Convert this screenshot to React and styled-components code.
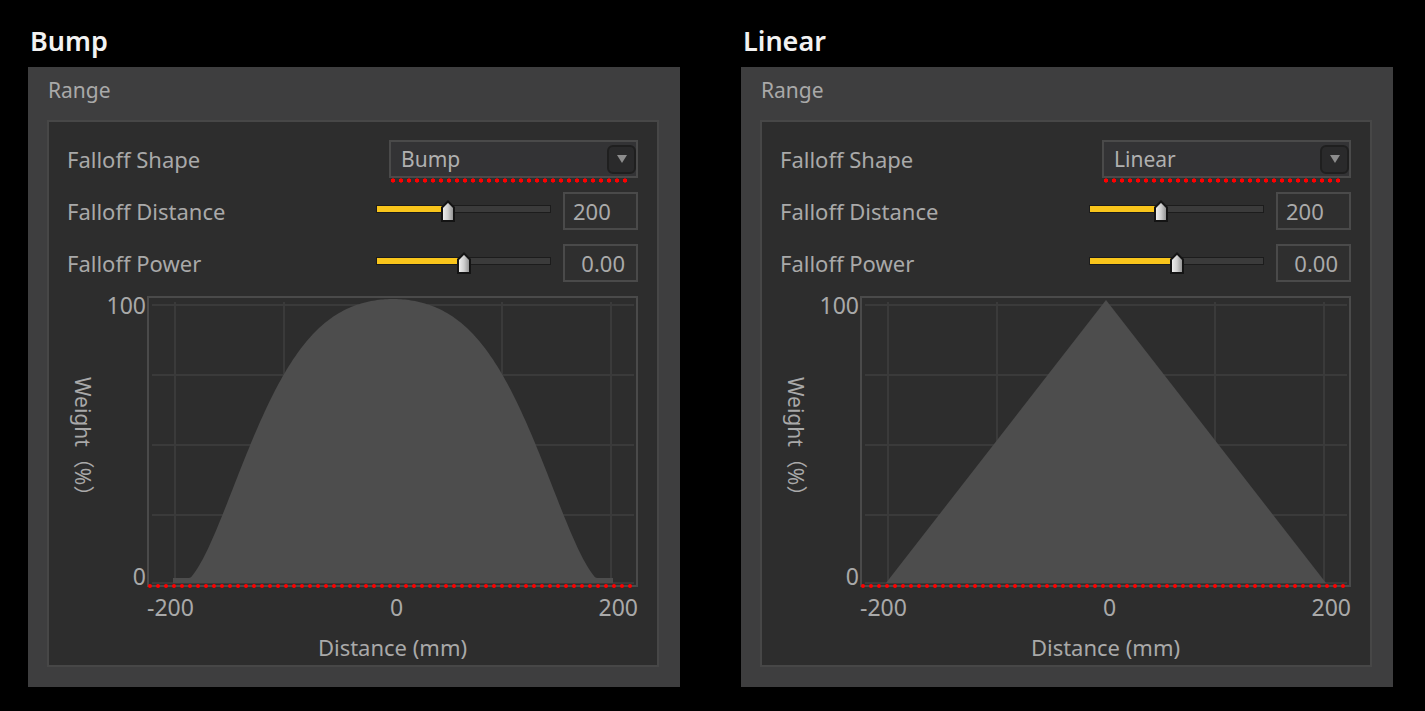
import React from 'react';
import styled, { createGlobalStyle } from 'styled-components';

const GlobalStyle = createGlobalStyle`
  html, body {
    margin: 0;
    padding: 0;
    background: #000;
  }
  body {
    font-family: "Noto Sans", "Open Sans", sans-serif;
  }
`

const Page = styled.div`
  width: 1425px;
  height: 711px;
  box-sizing: border-box;
  padding: 23px 0 0 28px;
  display: flex;
  gap: 61px;
`
const Column = styled.section`
  width: 652px;
  display: flex;
  flex-direction: column;
`
const Title = styled.h2`
  margin: 0 0 8px 2px;
  font-size: 27px;
  line-height: 36px;
  font-weight: 600;
  color: #f2f2f2;
`
const Panel = styled.div`
  height: 620px;
  box-sizing: border-box;
  background: #3e3e3f;
  padding: 10px 21px 20px 19px;
  display: flex;
  flex-direction: column;
`
const PanelLabel = styled.div`
  margin: 0 0 17px 1px;
  font-size: 21px;
  line-height: 26px;
  color: #a9a9a9;
`
const Group = styled.div`
  flex: 1;
  border: 2px solid #474747;
  background: #2d2d2d;
  padding: 18px 19px 0 0;
  display: flex;
  flex-direction: column;
  gap: 14px;
`
const Row = styled.div`
  height: 38px;
  padding-left: 18px;
  display: flex;
  align-items: center;
  justify-content: space-between;
`
const Label = styled.span`
  font-size: 22px;
  color: #a9a9a9;
`
const Controls = styled.div`
  display: flex;
  align-items: center;
  gap: 12px;
`
const Dropdown = styled.div`
  position: relative;
  width: 249px;
  height: 38px;
  box-sizing: border-box;
  border: 2px solid #4a4a4a;
  background: #333335;
  display: flex;
  align-items: center;
  justify-content: space-between;
  padding-left: 10px;
  font-size: 21px;
  color: #b0b0b0;
  &::after {
    content: '';
    position: absolute;
    left: -2px;
    right: 6px;
    bottom: -7px;
    height: 5px;
    background-image: radial-gradient(circle, #ff0000 1.9px, transparent 2.3px);
    background-size: 8px 5px;
    background-repeat: repeat-x;
  }
`
const ArrowButton = styled.div`
  width: 29px;
  height: 29px;
  box-sizing: border-box;
  border: 2px solid #1f1f1f;
  border-radius: 6px;
  background: #2a2a2b;
  display: flex;
  align-items: center;
  justify-content: center;
`
const SliderWrap = styled.div`
  position: relative;
  width: 175px;
  height: 22px;
`
const Track = styled.div`
  position: absolute;
  left: 0;
  right: 0;
  top: 5px;
  height: 8px;
  box-sizing: border-box;
  border: 1px solid #1c1c1c;
  background: linear-gradient(
    to right,
    #f9c51b 0,
    #f9c51b ${p => p.$value}%,
    #3b3b3b ${p => p.$value}%,
    #3b3b3b 100%
  );
`
const Thumb = styled.svg`
  position: absolute;
  top: 0;
  left: calc(${p => p.$value}% - 7px);
`
const ValueBox = styled.div`
  width: 75px;
  height: 38px;
  box-sizing: border-box;
  border: 2px solid #4a4a4a;
  background: #2f2f2f;
  display: flex;
  align-items: center;
  justify-content: ${p => (p.$align === 'right' ? 'flex-end' : 'flex-start')};
  padding: 0 11px 0 8px;
  font-size: 22px;
  color: #aaaaaa;
`
const Chart = styled.div`
  display: grid;
  grid-template-columns: 98px 491px;
  grid-template-rows: 292px auto auto;
`
const YAxis = styled.div`
  display: flex;
  min-width: 0;
`
const YTitle = styled.div`
  flex: none;
  margin-left: 19px;
  display: flex;
  align-items: center;
  justify-content: center;
  writing-mode: vertical-rl;
  font-size: 21px;
  color: #a9a9a9;
  font-family: "Noto Sans", "Noto Sans CJK JP", sans-serif;
`
const YTicks = styled.div`
  flex: 1;
  min-width: 0;
  margin-top: -3px;
  padding-right: 1px;
  display: flex;
  flex-direction: column;
  justify-content: space-between;
  align-items: flex-end;
  font-size: 23px;
  line-height: 24px;
  color: #a9a9a9;
`
const XTicks = styled.div`
  grid-column: 2;
  margin-top: 6px;
  display: grid;
  grid-template-columns: 1fr auto 1fr;
  font-size: 23px;
  line-height: 26px;
  color: #a9a9a9;
  span:first-child { justify-self: start; }
  span:nth-child(2) { margin-left: 8px; }
  span:last-child { justify-self: end; }
`
const XTitle = styled.div`
  grid-column: 2;
  margin-top: 14px;
  text-align: center;
  font-size: 22px;
  line-height: 26px;
  color: #a9a9a9;
`

function Slider({ value }) {
  return (
    <SliderWrap>
      <Track $value={value} />
      <Thumb $value={value} width="14" height="22" viewBox="0 0 14 22">
        <defs>
          <linearGradient id="thumbFill" x1="0" x2="1" y1="0" y2="0">
            <stop offset="0" stopColor="#f4f4f4" />
            <stop offset="0.5" stopColor="#cfcfcf" />
            <stop offset="1" stopColor="#8a8a8a" />
          </linearGradient>
        </defs>
        <polygon points="1,7.5 7,1.5 13,7.5 13,21 1,21" fill="url(#thumbFill)" stroke="#141414" strokeWidth="2" />
      </Thumb>
    </SliderWrap>
  )
}

// plot coords: x -200..200 -> 28..464, weight 0..100 -> 282..3
function bumpPath() {
  const pts = []
  for (let x = 26; x <= 466; x += 2) {
    const u = Math.abs(x - 246) / 202.7
    let f = 0
    if (u < 1) {
      const v = u * u
      const smooth = 1 - (3 * v * v - 2 * v * v * v)
      f = 0.5 * Math.cos((Math.PI / 2) * u) + 0.5 * smooth
    }
    pts.push(`${x},${(282 - 279 * f).toFixed(2)}`)
  }
  return `M26,287 L${pts.join(' L')} L466,287 Z`
}

function Plot({ shape }) {
  const dots = []
  for (let x = 3; x <= 489; x += 8) dots.push(x)
  return (
    <svg width="491" height="292" viewBox="0 0 491 292">
      <rect x="1" y="1" width="489" height="289" fill="#2d2d2d" stroke="#4a4a4a" strokeWidth="2" />
      {[9, 79, 149, 219, 287].map(y => (
        <line key={'h' + y} x1="5" x2="487" y1={y} y2={y} stroke="#3a3a3a" strokeWidth="2" />
      ))}
      {[28, 137, 246, 355, 464].map(x => (
        <line key={'v' + x} x1={x} x2={x} y1="6" y2="288" stroke="#3a3a3a" strokeWidth="2" />
      ))}
      {shape === 'Bump'
        ? <path d={bumpPath()} fill="#4d4d4d" />
        : <polygon points="26,287 246,4 466,287" fill="#4d4d4d" />}
      {dots.map(x => <circle key={x} cx={x} cy="290" r="2" fill="#ff0000" />)}
    </svg>
  )
}

function FalloffPanel({ shape }) {
  return (
    <Column>
      <Title>{shape}</Title>
      <Panel>
        <PanelLabel>Range</PanelLabel>
        <Group>
          <Row>
            <Label>Falloff Shape</Label>
            <Dropdown>
              <span>{shape}</span>
              <ArrowButton>
                <svg width="10" height="8" viewBox="0 0 10 8">
                  <polygon points="0,0 10,0 5,8" fill="#8d8d8d" />
                </svg>
              </ArrowButton>
            </Dropdown>
          </Row>
          <Row>
            <Label>Falloff Distance</Label>
            <Controls>
              <Slider value={41} />
              <ValueBox>200</ValueBox>
            </Controls>
          </Row>
          <Row>
            <Label>Falloff Power</Label>
            <Controls>
              <Slider value={50.3} />
              <ValueBox $align="right">0.00</ValueBox>
            </Controls>
          </Row>
          <Chart>
            <YAxis>
              <YTitle>Weight（%）</YTitle>
              <YTicks>
                <span>100</span>
                <span>0</span>
              </YTicks>
            </YAxis>
            <Plot shape={shape} />
            <XTicks>
              <span>-200</span>
              <span>0</span>
              <span>200</span>
            </XTicks>
            <XTitle>Distance (mm)</XTitle>
          </Chart>
        </Group>
      </Panel>
    </Column>
  )
}

export default function App() {
  return (
    <>
      <GlobalStyle />
      <Page>
        <FalloffPanel shape="Bump" />
        <FalloffPanel shape="Linear" />
      </Page>
    </>
  )
}
